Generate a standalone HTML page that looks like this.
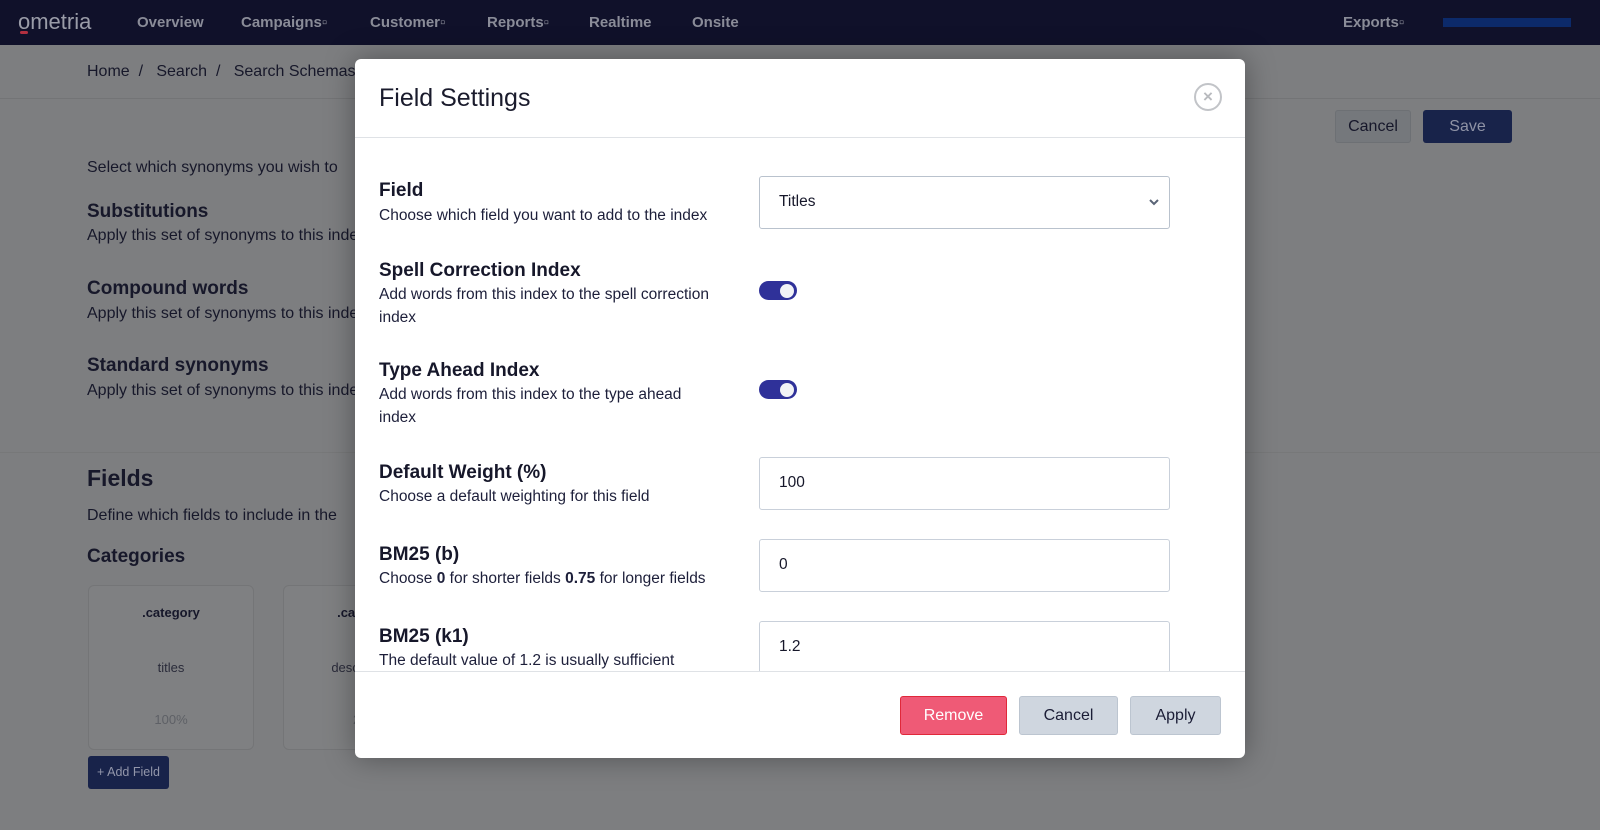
<!DOCTYPE html>
<html><head><meta charset="utf-8"><style>
*{box-sizing:border-box;margin:0;padding:0}
body{width:1600px;height:830px;overflow:hidden;font-family:"Liberation Sans",sans-serif;background:#7d7e80;position:relative;color:#16172a}
.nav{position:absolute;left:0;top:0;width:1600px;height:45px;background:#10112a;color:#8a8c98;font-weight:bold;font-size:15px}
.nav span{position:absolute;top:14px}
.abs{position:absolute;white-space:nowrap}
.bg{color:#17182a}
.h{font-weight:bold;font-size:19px}
.t{font-size:16px}
.card{position:absolute;border:1px solid #747577;border-radius:6px;background:#7f8082;width:166px;height:165px;top:585px}
.modal{position:absolute;left:355px;top:59px;width:890px;height:699px;background:#fff;border-radius:6px;box-shadow:0 0 30px rgba(0,0,0,.35);overflow:hidden}
.m{position:absolute;white-space:nowrap;color:#16172a}
.mh{font-size:19px;font-weight:bold}
.md{font-size:15.5px;color:#1d1f3a}
.inp{position:absolute;left:404px;width:411px;height:53px;border:1px solid #c9d0da;border-radius:3px;font-size:15.5px;padding:16px 19px}
.tog{position:absolute;left:404px;width:38px;height:19px;border-radius:10px;background:#2f3199}
.tog::after{content:"";position:absolute;right:3px;top:2.5px;width:14px;height:14px;border-radius:50%;background:#f1f2f6}
.btn{position:absolute;top:637px;height:39px;border-radius:3px;font-size:16px;text-align:center;line-height:37px}
</style></head><body>
<div class="nav">
<span style="left:18px;top:9px;font-size:22px;color:#9a9ca8;font-weight:normal">ometria</span>
<div style="position:absolute;left:20px;top:31px;width:8px;height:3px;background:#b23040;border-radius:2px"></div>
<span style="left:137px">Overview</span>
<span style="left:241px">Campaigns▫</span>
<span style="left:370px">Customer▫</span>
<span style="left:487px">Reports▫</span>
<span style="left:589px">Realtime</span>
<span style="left:692px">Onsite</span>
<span style="left:1343px">Exports▫</span>
<div style="position:absolute;left:1443px;top:18px;width:128px;height:9px;background:#0c2a6a"></div>
</div>
<div class="abs" style="left:0;top:98px;width:1600px;height:1px;background:#737476"></div>
<div class="abs" style="left:0;top:452px;width:1600px;height:1px;background:#777879"></div>
<div class="abs bg t" style="left:87px;top:63px">Home&nbsp; /&nbsp;&nbsp; Search&nbsp; /&nbsp;&nbsp; Search Schemas</div>
<div class="abs" style="left:1335px;top:110px;width:76px;height:33px;border:1px solid #6d7074;background:#75787c;border-radius:3px;font-size:16px;text-align:center;line-height:31px">Cancel</div>
<div class="abs" style="left:1423px;top:110px;width:89px;height:33px;background:#18234a;border-radius:3px;font-size:16px;text-align:center;line-height:33px;color:#8f93a6">Save</div>
<div class="abs bg t" style="left:87px;top:159px">Select which synonyms you wish to</div>
<div class="abs bg h" style="left:87px;top:201px">Substitutions</div>
<div class="abs bg t" style="left:87px;top:227px">Apply this set of synonyms to this index</div>
<div class="abs bg h" style="left:87px;top:278px">Compound words</div>
<div class="abs bg t" style="left:87px;top:305px">Apply this set of synonyms to this index</div>
<div class="abs bg h" style="left:87px;top:355px">Standard synonyms</div>
<div class="abs bg t" style="left:87px;top:382px">Apply this set of synonyms to this index</div>
<div class="abs bg" style="left:87px;top:465px;font-size:23px;font-weight:bold">Fields</div>
<div class="abs bg t" style="left:87px;top:507px">Define which fields to include in the</div>
<div class="abs bg h" style="left:87px;top:546px">Categories</div>
<div class="card" style="left:88px"><div style="text-align:center;margin-top:19px;font-size:13px;font-weight:bold">.category</div><div style="text-align:center;margin-top:40px;font-size:13px;color:#2a2b3a">titles</div><div style="text-align:center;margin-top:37px;font-size:13px;color:#5e6066">100%</div></div>
<div class="card" style="left:283px"><div style="text-align:center;margin-top:19px;font-size:13px;font-weight:bold">.category</div><div style="text-align:center;margin-top:40px;font-size:13px;color:#2a2b3a">descriptions</div><div style="text-align:center;margin-top:37px;font-size:13px;color:#5e6066">20%</div></div>
<div class="abs" style="left:88px;top:756px;width:81px;height:33px;background:#18234a;border-radius:3px;font-size:12.5px;color:#9296aa;text-align:center;line-height:33px">+ Add Field</div>

<div class="modal">
<div class="m" style="left:24px;top:25px;font-size:25px;color:#1a1b2c">Field Settings</div>
<div style="position:absolute;left:839px;top:24px;width:28px;height:28px;border:2px solid #c2c4c8;border-radius:50%;color:#b8babe;text-align:center;font-size:17px;line-height:23px;font-weight:bold">×</div>
<div style="position:absolute;left:0;top:78px;width:890px;height:1px;background:#dfe2e6"></div>
<div style="position:absolute;left:0;top:79px;width:890px;height:533px;overflow:hidden">
<div class="m mh" style="left:24px;top:42px">Field</div>
<div class="m md" style="left:24px;top:69px">Choose which field you want to add to the index</div>
<div class="inp" style="top:38px;border-color:#b9c2cd">Titles<svg style="position:absolute;right:9px;top:20px" width="12" height="10" viewBox="0 0 12 10"><path d="M2 3l4 4 4-4" fill="none" stroke="#5a6476" stroke-width="2"/></svg></div>
<div class="m mh" style="left:24px;top:122px">Spell Correction Index</div>
<div class="m md" style="left:24px;top:148px">Add words from this index to the spell correction</div>
<div class="m md" style="left:24px;top:171px">index</div>
<div class="tog" style="top:143px"></div>
<div class="m mh" style="left:24px;top:222px">Type Ahead Index</div>
<div class="m md" style="left:24px;top:248px">Add words from this index to the type ahead</div>
<div class="m md" style="left:24px;top:271px">index</div>
<div class="tog" style="top:242px"></div>
<div class="m mh" style="left:24px;top:324px">Default Weight (%)</div>
<div class="m md" style="left:24px;top:350px">Choose a default weighting for this field</div>
<div class="inp" style="top:319px">100</div>
<div class="m mh" style="left:24px;top:406px">BM25 (b)</div>
<div class="m md" style="left:24px;top:432px">Choose <b>0</b> for shorter fields <b>0.75</b> for longer fields</div>
<div class="inp" style="top:401px">0</div>
<div class="m mh" style="left:24px;top:488px">BM25 (k1)</div>
<div class="m md" style="left:24px;top:514px">The default value of 1.2 is usually sufficient</div>
<div class="inp" style="top:483px">1.2</div>
</div>
<div style="position:absolute;left:0;top:612px;width:890px;height:1px;background:#dfe2e6"></div>
<div class="btn" style="left:545px;width:107px;background:#ef5a76;border:1px solid #e0283a;color:#fff">Remove</div>
<div class="btn" style="left:664px;width:99px;background:#cfd6df;border:1px solid #bcc5d0;color:#1b1d36">Cancel</div>
<div class="btn" style="left:775px;width:91px;background:#cfd6df;border:1px solid #bcc5d0;color:#1b1d36">Apply</div>
</div>
</body></html>
